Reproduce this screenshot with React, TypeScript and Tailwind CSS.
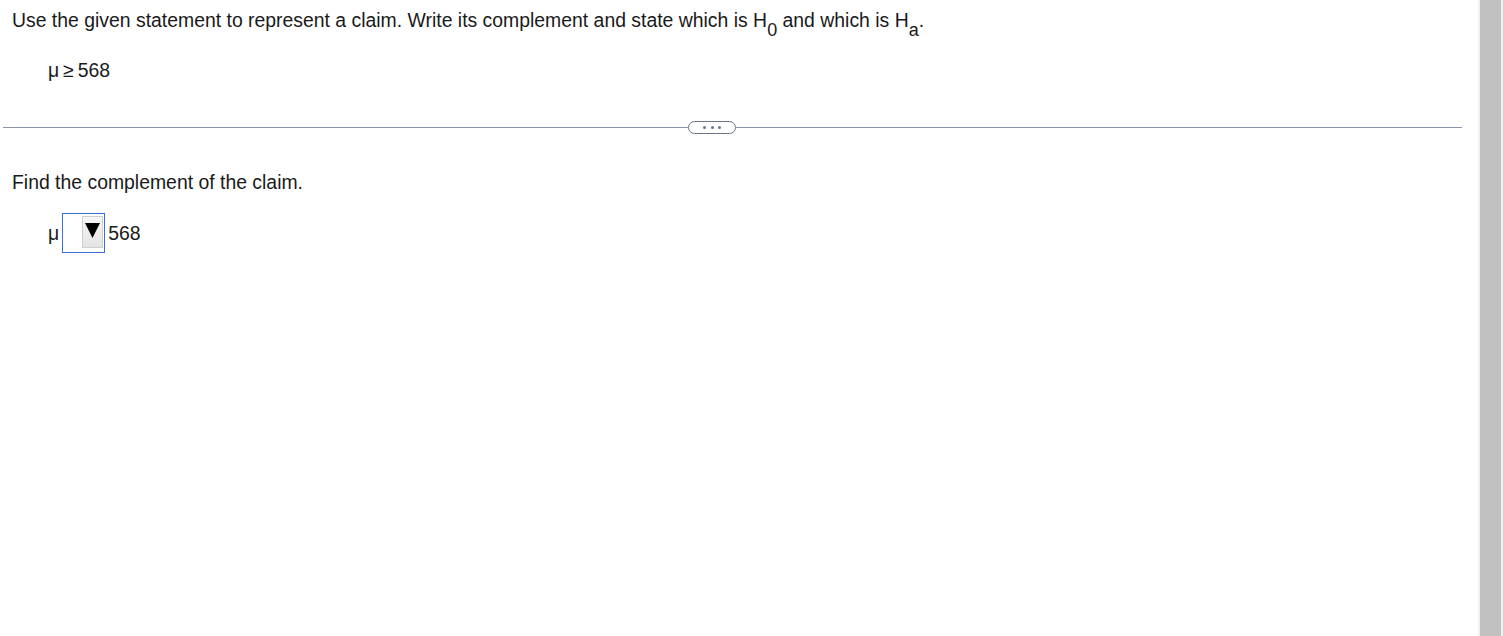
export default function App() {
  return (
    <div className="flex h-[636px] w-full overflow-hidden bg-white font-['Liberation_Sans',Arial,sans-serif] text-[19.4px] text-[#1a1a1a]">
      <main className="flex-1">
        <p className="ml-[12px] mt-[9px] h-[22px] leading-[22px]">
          Use the given statement to represent a claim. Write its complement and state which is H
          <sub className="text-[18px] leading-none align-[-4px]">0</sub> and which is H
          <sub className="text-[18px] leading-none align-[-4px]">a</sub>.
        </p>
        <p className="ml-[48px] mt-[28px] h-[22px] leading-[22px]">μ{"\u2009"}≥{"\u2009"}568</p>

        <div className="ml-[3px] mr-[16px] mt-[40px] flex items-center">
          <div className="h-px w-[685px] bg-[#8a93a8]" />
          <button className="flex h-[13px] w-[48px] items-center justify-center gap-[4.5px] rounded-full border border-[#6b7588] bg-white">
            <span className="h-[3px] w-[3px] rounded-full bg-[#6b7588]" />
            <span className="h-[3px] w-[3px] rounded-full bg-[#6b7588]" />
            <span className="h-[3px] w-[3px] rounded-full bg-[#6b7588]" />
          </button>
          <div className="h-px flex-1 bg-[#8a93a8]" />
        </div>

        <p className="ml-[12px] mt-[37px] h-[22px] leading-[22px]">Find the complement of the claim.</p>

        <div className="ml-[48px] mt-[20px] flex items-center">
          <span className="leading-[22px]">μ</span>
          <div className="ml-[3px] flex h-[40px] w-[43px] items-start justify-end border border-[#3c6fd6] pr-[1px] pt-[2px]">
            <div className="flex h-[32px] w-[21px] items-start justify-center border border-[#cfcfcf] bg-gradient-to-b from-[#f6f6f6] to-[#e4e4e4] pt-[5px]">
              <svg width="15" height="16" viewBox="0 0 15 16">
                <path d="M0 1 H15 L7.5 16 Z" fill="#000" />
              </svg>
            </div>
          </div>
          <span className="ml-[3px] leading-[22px]">568</span>
        </div>
      </main>
      <div className="flex h-full w-[25px] bg-[#f1f1f1] px-[2px]">
        <div className="h-full w-full bg-[#c1c1c1]" />
      </div>
    </div>
  );
}
